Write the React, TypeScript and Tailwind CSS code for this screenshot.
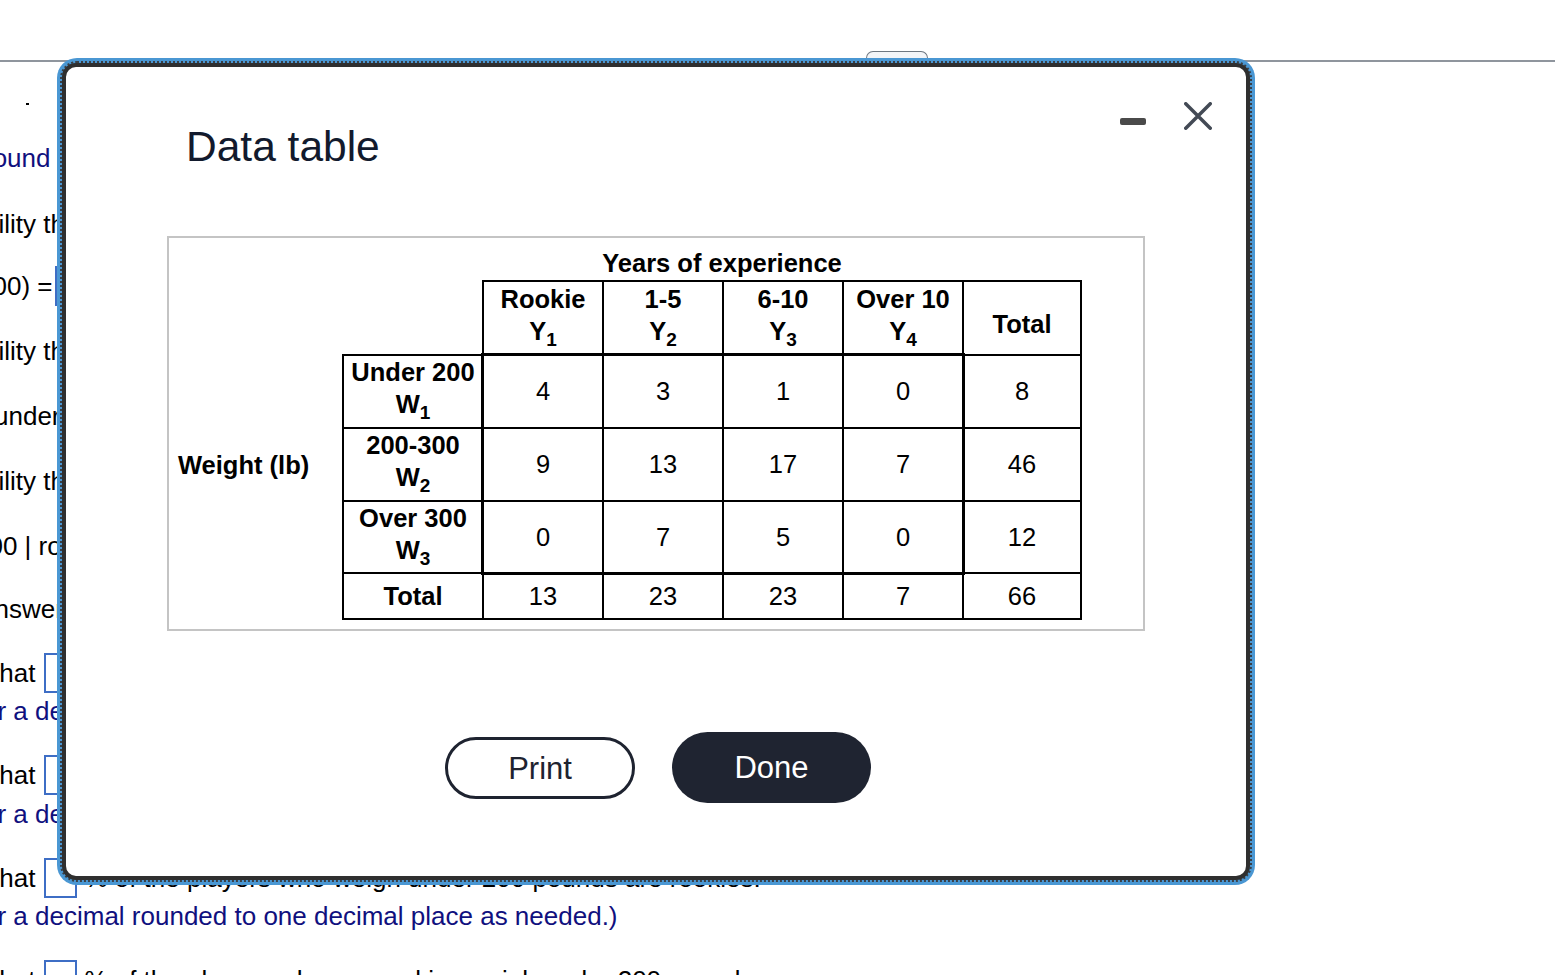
import React from "react";

function Sub({ n }: { n: string }) {
  return <span className="relative top-[6px] text-[19px] leading-none">{n}</span>;
}

function HeadCell({ top, sub, last }: { top: string; sub: string; last?: boolean }) {
  return (
    <div
      className={
        "w-[120px] h-full border-l-2 border-t-2 border-black flex flex-col items-center justify-center font-bold " +
        (last ? "border-r-2" : "")
      }
    >
      <div className="leading-[32px]">{top}</div>
      <div className="h-[39px] leading-[32px]">
        Y<Sub n={sub} />
      </div>
    </div>
  );
}

function RowHead({ top, sub }: { top: string; sub: string }) {
  return (
    <div className="w-[140px] h-full border-l-2 border-t-2 border-black flex flex-col items-center justify-center font-bold">
      <div className="leading-[32px]">{top}</div>
      <div className="h-[39px] leading-[32px]">
        W<Sub n={sub} />
      </div>
    </div>
  );
}

function Cell({ v, last, bottom }: { v: string; last?: boolean; bottom?: boolean }) {
  return (
    <div
      className={
        "w-[120px] h-full border-l-2 border-t-2 border-black flex items-center justify-center " +
        (last ? "border-r-2 " : "") +
        (bottom ? "border-b-2" : "")
      }
    >
      {v}
    </div>
  );
}

function Box() {
  return <div className="h-[40px] w-[33px] shrink-0 border-2 border-[#3e6ec5] bg-white" />;
}

export default function App() {
  const rows = [
    { top: "Under 200", sub: "1", vals: ["4", "3", "1", "0", "8"], h: "h-[73px]" },
    { top: "200-300", sub: "2", vals: ["9", "13", "17", "7", "46"], h: "h-[73px]" },
    { top: "Over 300", sub: "3", vals: ["0", "7", "5", "0", "12"], h: "h-[72px]" },
  ];
  return (
    <div className="relative w-[1555px] h-[975px] overflow-hidden bg-white text-black [font-family:'Liberation_Sans',Arial,sans-serif]">
      {/* top bar */}
      <div className="h-[62px] border-b-2 border-[#8f959d] pl-[866px] pt-[51px]">
        <div className="h-[9px] w-[62px] rounded-t-[7px] border-[1.5px] border-b-0 border-[#6e7781] bg-[#f3f5f8]" />
      </div>

      {/* background page text (clipped on the left) */}
      <div className="text-[26px]">
        <div className="mt-[41px] h-[2px] pl-[26px]">
          <div className="h-[2px] w-[3px] bg-black" />
        </div>
        <div className="mt-[33px] h-[40px] leading-[40px] whitespace-nowrap ml-[-16px] text-[#10107e]">round to</div>
        <div className="mt-[26px] h-[40px] leading-[40px] whitespace-nowrap ml-[-16px]">bility that</div>
        <div className="mt-[22px] h-[40px] flex items-center whitespace-nowrap ml-[-22px]">
          <span>200) =</span>
          <div className="ml-[3px]">
            <Box />
          </div>
        </div>
        <div className="mt-[25px] h-[40px] leading-[40px] whitespace-nowrap ml-[-16px]">bility that</div>
        <div className="mt-[25px] h-[40px] leading-[40px] whitespace-nowrap ml-[-6px]">under 200</div>
        <div className="mt-[25px] h-[40px] leading-[40px] whitespace-nowrap ml-[-16px]">bility that</div>
        <div className="mt-[25px] h-[40px] leading-[40px] whitespace-nowrap ml-[-26px]">200 | rookie</div>
        <div className="mt-[23px] h-[40px] leading-[40px] whitespace-nowrap ml-[-20px]">answer</div>
        <div className="mt-[24px] h-[40px] flex items-center whitespace-nowrap ml-[-8px]">
          <span>that</span>
          <div className="ml-[9px]">
            <Box />
          </div>
        </div>
        <div className="mt-[-2px] h-[40px] leading-[40px] whitespace-nowrap ml-[-17px] text-[#10107e]">or a decimal</div>
        <div className="mt-[24px] h-[40px] flex items-center whitespace-nowrap ml-[-8px]">
          <span>that</span>
          <div className="ml-[9px]">
            <Box />
          </div>
        </div>
        <div className="mt-[-1px] h-[40px] leading-[40px] whitespace-nowrap ml-[-17px] text-[#10107e]">or a decimal</div>
        <div className="mt-[24px] h-[40px] flex items-center whitespace-nowrap ml-[-8px]">
          <span>that</span>
          <div className="ml-[9px]">
            <Box />
          </div>
          <span className="ml-[7px]">% of the players who weigh under 200 pounds are rookies.</span>
        </div>
        <div className="mt-[-2px] h-[40px] leading-[40px] whitespace-nowrap ml-[-17px] text-[#10107e]">
          or a decimal rounded to one decimal place as needed.)
        </div>
        <div className="mt-[24px] h-[40px] flex items-center whitespace-nowrap ml-[-8px]">
          <span>that</span>
          <div className="ml-[9px]">
            <Box />
          </div>
          <span className="ml-[7px]">% of the players who are rookies weigh under 200 pounds.</span>
        </div>
      </div>

      {/* modal */}
      <div className="absolute left-[57px] top-[58px] w-[1198px] h-[827px] rounded-[20px] bg-[#4a97d3] p-[3px]">
        <div className="h-full rounded-[17px] border-2 border-dotted border-[#3a3f45]">
          <div className="h-full rounded-[14px] border-4 border-[#2f2f2f] bg-white flex flex-col">
            {/* header */}
            <div className="flex items-start">
              <div className="mt-[56px] ml-[120px] text-[42.5px] leading-[48px] text-[#121a2d]">Data table</div>
              <div className="ml-auto mr-[34px] flex items-start">
                <div className="mt-[51px] h-[7px] w-[26px] rounded-[2px] bg-[#4a4a4a]" />
                <svg className="mt-[35px] ml-[38px]" width="28" height="28" viewBox="0 0 28 28">
                  <path
                    d="M1.75 1.75L26.25 26.25M26.25 1.75L1.75 26.25"
                    stroke="#434a55"
                    strokeWidth="3.5"
                    strokeLinecap="round"
                    fill="none"
                  />
                </svg>
              </div>
            </div>

            {/* table panel */}
            <div className="mt-[65px] ml-[101px] w-[978px] h-[395px] border-2 border-[#c4c4c4] pt-[10px] flex text-[25.5px]">
              <div className="w-[173px]">
                <div className="h-[106px]" />
                <div className="h-[222px] flex items-center pl-[9px] font-bold">Weight (lb)</div>
              </div>
              <div className="relative w-[740px]">
                <div className="h-[32px] flex">
                  <div className="ml-[140px] w-[480px] text-center leading-[30px] font-bold">Years of experience</div>
                </div>
                <div className="h-[74px] flex">
                  <div className="w-[140px]" />
                  <HeadCell top="Rookie" sub="1" />
                  <HeadCell top="1-5" sub="2" />
                  <HeadCell top="6-10" sub="3" />
                  <HeadCell top="Over 10" sub="4" />
                  <div className="w-[120px] h-full border-l-2 border-t-2 border-r-2 border-black flex items-center justify-center pt-[12px] font-bold">
                    Total
                  </div>
                </div>
                {rows.map((r) => (
                  <div key={r.top} className={r.h + " flex"}>
                    <RowHead top={r.top} sub={r.sub} />
                    <Cell v={r.vals[0]} />
                    <Cell v={r.vals[1]} />
                    <Cell v={r.vals[2]} />
                    <Cell v={r.vals[3]} />
                    <Cell v={r.vals[4]} last />
                  </div>
                ))}
                <div className="h-[48px] flex">
                  <div className="w-[140px] h-full border-l-2 border-t-2 border-b-2 border-black flex items-center justify-center font-bold">
                    Total
                  </div>
                  <Cell v="13" bottom />
                  <Cell v="23" bottom />
                  <Cell v="23" bottom />
                  <Cell v="7" bottom />
                  <Cell v="66" last bottom />
                </div>
                <div className="pointer-events-none absolute left-[139px] top-[105px] w-[484px] h-[222px] border-[3px] border-black" />
              </div>
            </div>

            {/* buttons */}
            <div className="mt-[101px] pl-[379px] flex items-center gap-[37px]">
              <div className="w-[190px] h-[62px] rounded-full border-[3px] border-[#1e2330] flex items-center justify-center pt-[3px] text-[31px] text-[#1e2330]">
                Print
              </div>
              <div className="w-[199px] h-[71px] rounded-full bg-[#1f2431] flex items-center justify-center pt-[2px] text-[31px] text-white">
                Done
              </div>
            </div>
          </div>
        </div>
      </div>
    </div>
  );
}
